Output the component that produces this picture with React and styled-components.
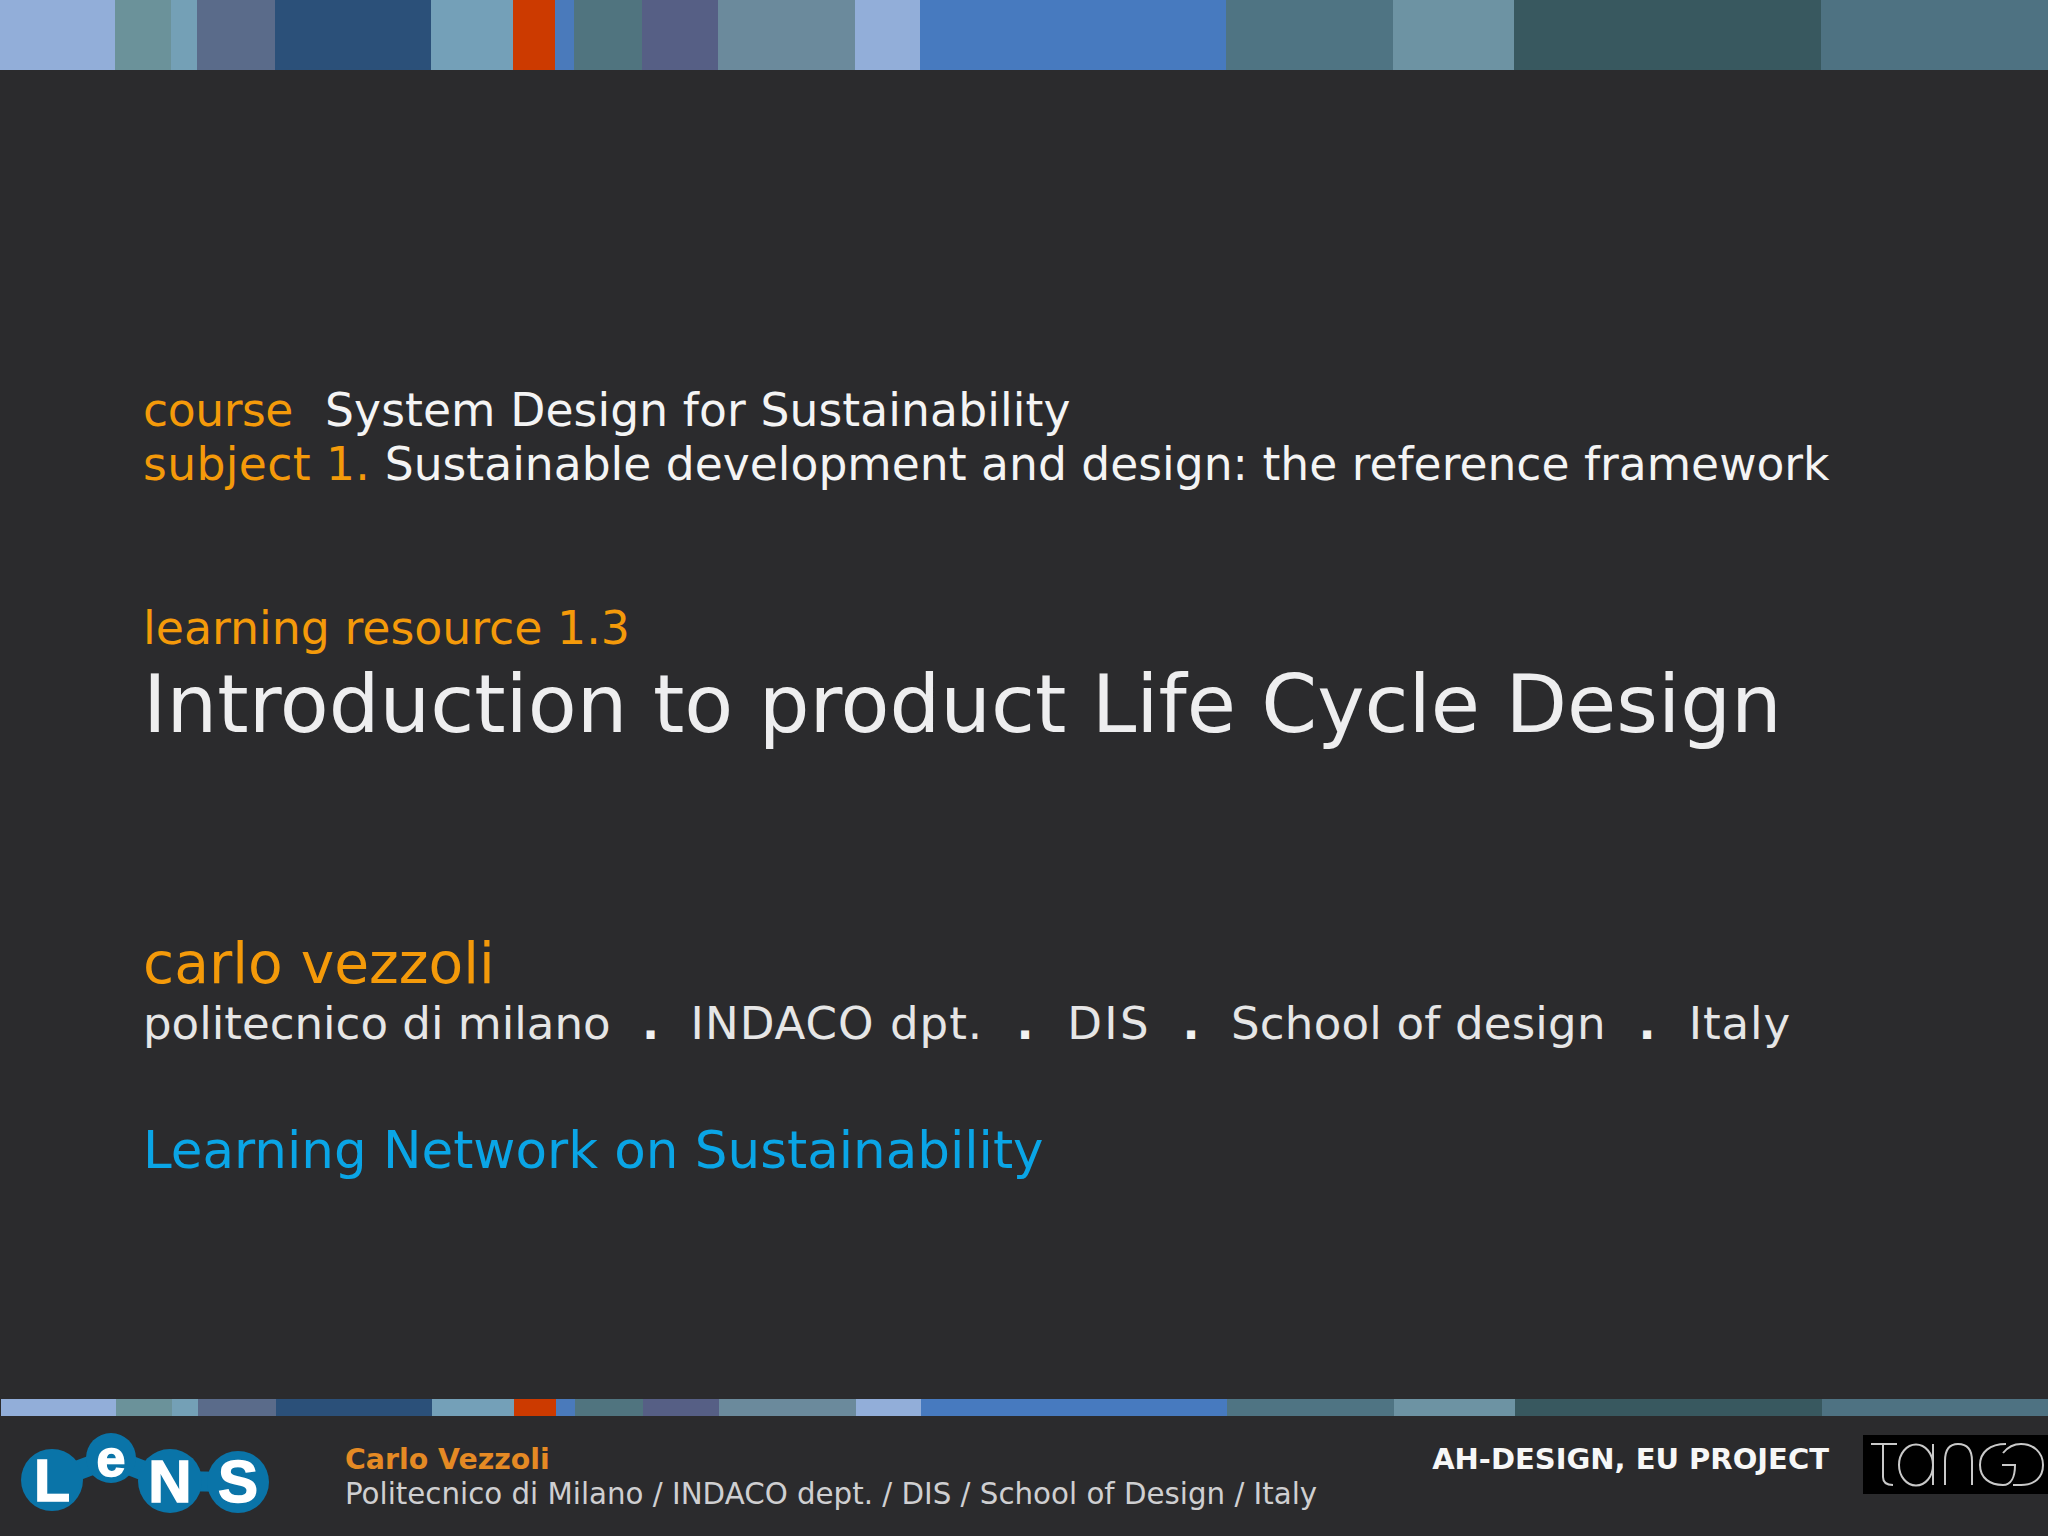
import React from 'react'
import styled, { createGlobalStyle } from 'styled-components'

const GlobalStyle = createGlobalStyle`
  html, body {
    margin: 0;
    padding: 0;
    background: #2b2b2d;
  }
`

const stripes = [
  ['#92aed9', 115], ['#6b929a', 56], ['#74a0b6', 26], ['#5a6b8a', 78],
  ['#2b5079', 156], ['#74a0b8', 82], ['#cc3a00', 42], ['#4a7abb', 19],
  ['#50747f', 68], ['#565f85', 76], ['#6b8a9c', 137], ['#92aed9', 65],
  ['#477abf', 306], ['#4f7483', 167], ['#6d93a3', 121], ['#38585f', 307],
  ['#4e7282', 227],
]

const Slide = styled.div`
  width: 2048px;
  height: 1536px;
  display: flex;
  flex-direction: column;
  overflow: hidden;
  background: #2b2b2d;
  font-family: "DejaVu Sans", Verdana, sans-serif;
`

const StripeBar = styled.div`
  display: flex;
  flex: none;
  height: ${p => p.$height}px;
  margin-left: ${p => p.$inset || 0}px;
`

const Stripe = styled.div`
  flex: none;
  width: ${p => p.$w}px;
  background: ${p => p.$c};
`

const Main = styled.main`
  flex: 1;
  display: flex;
  flex-direction: column;
  padding: 314px 0 0 143px;
`

const Heading = styled.div`
  font-size: 45.6px;
  line-height: 53.5px;
  color: #f4f4f4;
  white-space: pre;
`

const Orange = styled.span`
  color: #f49a0a;
  letter-spacing: ${p => p.$track || 0}px;
  margin-right: ${p => p.$gap || 0}px;
`

const Resource = styled.div`
  margin-top: 110px;
  font-size: 45.8px;
  line-height: 54px;
  color: #f49a0a;
`

const Title = styled.h1`
  margin: 0;
  font-size: 80px;
  line-height: 100px;
  font-weight: 400;
  color: #eeeeef;
`

const Author = styled.div`
  margin-top: 175px;
  font-size: 56.7px;
  line-height: 66px;
  color: #f49a0a;
`

const Affiliation = styled.div`
  font-size: 45.1px;
  line-height: 56px;
  color: #e6e6e6;
  white-space: nowrap;
`

const Tracked = styled.span`
  letter-spacing: ${p => p.$track}px;
`

const Dot = styled.b`
  display: inline-block;
  width: ${p => p.$w}px;
  text-align: center;
  font-weight: 700;
  color: #f2f2f2;
`

const Network = styled.div`
  margin-top: 65px;
  font-size: 51.5px;
  line-height: 66px;
  color: #0aa5e6;
`

const Footer = styled.footer`
  flex: none;
  height: 120px;
  display: flex;
  align-items: flex-start;
`

const LogoSlot = styled.div`
  flex: none;
  width: 345px;
  padding: 6px 0 0 19px;
  box-sizing: border-box;
`

const Credits = styled.div`
  flex: 1;
  padding-top: 27px;
  white-space: nowrap;
`

const CreditName = styled.div`
  font-size: 28.4px;
  line-height: 34px;
  font-weight: 700;
  color: #e58a24;
`

const CreditLine = styled.div`
  font-size: 29.3px;
  line-height: 34px;
  color: #cfcfd1;
`

const Project = styled.div`
  flex: none;
  padding: 26px 34px 0 0;
  font-size: 29px;
  line-height: 34px;
  font-weight: 700;
  color: #f7f7f7;
`

const TangoBox = styled.div`
  flex: none;
  width: 185px;
  height: 59px;
  margin-top: 19px;
  background: #000;
`

const LensLogo = () => (
  <svg width="252" height="102" viewBox="0 -10 252 102">
    <g stroke="#0a74a8" strokeWidth="20">
      <line x1="33" y1="48" x2="92" y2="26" />
      <line x1="92" y1="26" x2="151" y2="49" />
      <line x1="151" y1="49" x2="219" y2="50" />
    </g>
    <g fill="#0a74a8">
      <circle cx="33" cy="48" r="31" />
      <circle cx="92" cy="26" r="25" />
      <circle cx="151" cy="49" r="32" />
      <circle cx="219" cy="50" r="31" />
    </g>
    <g fill="#ffffff" stroke="#ffffff" strokeWidth="1.5" fontFamily="'Liberation Sans', Arial, sans-serif" fontWeight="700" textAnchor="middle">
      <text x="33" y="69" fontSize="59">L</text>
      <text x="92" y="44" fontSize="52">e</text>
      <text x="151" y="70" fontSize="60">N</text>
      <text x="219" y="70" fontSize="60">S</text>
    </g>
  </svg>
)

const TangoLogo = () => (
  <svg width="185" height="59" viewBox="0 0 185 59" fill="none" stroke="#c9c9c9" strokeWidth="2">
    <path d="M8 9 H34 M20 9 V42 Q20 50 30 50" />
    <ellipse cx="53" cy="30" rx="17" ry="20.5" />
    <path d="M70 9 V50" />
    <path d="M82 50 V26 Q82 9 95 9 Q109 9 109 26 V50" />
    <path d="M143 9 C127 9 117 17 117 30 C117 43 127 50 140 50 C148 50 152 42 152 30 H139" />
    <path d="M150 50 H158 C172 50 180 42 180 30 C180 17 170 9 158 9 C150 9 144 13 140 18" />
  </svg>
)

export default function App() {
  return (
    <>
      <GlobalStyle />
      <Slide>
        <StripeBar $height={70}>
          {stripes.map(([c, w], i) => <Stripe key={i} $c={c} $w={w} />)}
        </StripeBar>
        <Main>
          <Heading><Orange $track={-0.4} $gap={3}>course</Orange>  <Tracked $track={0.1}>System Design for Sustainability</Tracked></Heading>
          <Heading><Orange $track={0.4}>subject 1.</Orange> Sustainable development and design: the reference framework</Heading>
          <Resource>learning resource 1.3</Resource>
          <Title>Introduction to product Life Cycle Design</Title>
          <Author>carlo vezzoli</Author>
          <Affiliation>
            politecnico di milano<Dot $w={80}>.</Dot><Tracked $track={1}>INDACO dpt.</Tracked><Dot $w={84}>.</Dot><Tracked $track={2.4}>DIS</Tracked><Dot $w={80}>.</Dot><Tracked $track={0.2}>School of design</Tracked><Dot $w={83}>.</Dot><Tracked $track={0.9}>Italy</Tracked>
          </Affiliation>
          <Network>Learning Network on Sustainability</Network>
        </Main>
        <StripeBar $height={17} $inset={1}>
          {stripes.map(([c, w], i) => <Stripe key={i} $c={c} $w={w} />)}
        </StripeBar>
        <Footer>
          <LogoSlot><LensLogo /></LogoSlot>
          <Credits>
            <CreditName>Carlo Vezzoli</CreditName>
            <CreditLine>Politecnico di Milano / INDACO dept. / DIS / School of Design / Italy</CreditLine>
          </Credits>
          <Project>AH-DESIGN, EU PROJECT</Project>
          <TangoBox><TangoLogo /></TangoBox>
        </Footer>
      </Slide>
    </>
  )
}
